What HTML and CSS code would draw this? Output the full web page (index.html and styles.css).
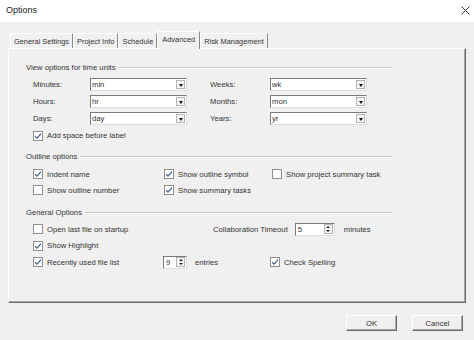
FILE: index.html
```html
<!DOCTYPE html>
<html lang="en">

<head>
    <meta charset="UTF-8">
    <meta name="viewport" content="width=device-width, initial-scale=1.0">
    <title>Options</title>
    <link rel="stylesheet" href="styles.css">
</head>

<body>
    <div class="window">
        <div class="title-bar">
            <span class="title">Options</span>
            <svg class="close" width="9" height="9" viewBox="0 0 9 9">
                <path d="M0.5 0.5L8.5 8.5M8.5 0.5L0.5 8.5" stroke="#333" stroke-width="1" fill="none" />
            </svg>
        </div>

        <div class="dialog">
            <div class="tabs">
                <div class="tab">General Settings</div>
                <div class="tab">Project Info</div>
                <div class="tab">Schedule</div>
                <div class="tab tab-active">Advanced</div>
                <div class="tab">Risk Management</div>
            </div>

            <div class="panel">
                <!-- View options for time units -->
                <div class="group">
                    <div class="group-title"><span>View options for time units</span>
                        <div class="group-line"></div>
                    </div>
                    <div class="units-grid">
                        <span>Minutes:</span>
                        <div class="combo"><span>min</span><div class="combo-btn"></div></div>
                        <span class="label-right">Weeks:</span>
                        <div class="combo"><span>wk</span><div class="combo-btn"></div></div>

                        <span>Hours:</span>
                        <div class="combo"><span>hr</span><div class="combo-btn"></div></div>
                        <span class="label-right">Months:</span>
                        <div class="combo"><span>mon</span><div class="combo-btn"></div></div>

                        <span>Days:</span>
                        <div class="combo"><span>day</span><div class="combo-btn"></div></div>
                        <span class="label-right">Years:</span>
                        <div class="combo"><span>yr</span><div class="combo-btn"></div></div>

                        <label class="check-row span-all">
                            <span class="box"><svg width="8" height="8" viewBox="0 0 8 8"><path d="M1 4.2L3 6.2L7 1.6" stroke="#3a5a84" stroke-width="1.1" fill="none" /></svg></span>
                            Add space before label
                        </label>
                    </div>
                </div>

                <!-- Outline options -->
                <div class="group group-outline">
                    <div class="group-title"><span>Outline options</span>
                        <div class="group-line"></div>
                    </div>
                    <div class="outline-grid">
                        <label class="check-row">
                            <span class="box"><svg width="8" height="8" viewBox="0 0 8 8"><path d="M1 4.2L3 6.2L7 1.6" stroke="#3a5a84" stroke-width="1.1" fill="none" /></svg></span>
                            Indent name
                        </label>
                        <label class="check-row">
                            <span class="box"><svg width="8" height="8" viewBox="0 0 8 8"><path d="M1 4.2L3 6.2L7 1.6" stroke="#3a5a84" stroke-width="1.1" fill="none" /></svg></span>
                            Show outline symbol
                        </label>
                        <label class="check-row">
                            <span class="box"></span>
                            Show project summary task
                        </label>

                        <label class="check-row">
                            <span class="box"></span>
                            Show outline number
                        </label>
                        <label class="check-row">
                            <span class="box"><svg width="8" height="8" viewBox="0 0 8 8"><path d="M1 4.2L3 6.2L7 1.6" stroke="#3a5a84" stroke-width="1.1" fill="none" /></svg></span>
                            Show summary tasks
                        </label>
                    </div>
                </div>

                <!-- General Options -->
                <div class="group group-general">
                    <div class="group-title"><span>General Options</span>
                        <div class="group-line"></div>
                    </div>
                    <div class="general-grid">
                        <label class="check-row">
                            <span class="box"></span>
                            Open last file on startup
                        </label>
                        <div class="timeout">
                            <span>Collaboration Timeout</span>
                            <div class="spin spin-wide"><span>5</span>
                                <div class="spin-btns"><span class="arrow-up"></span><span class="arrow-down"></span></div>
                            </div>
                            <span class="unit">minutes</span>
                        </div>

                        <label class="check-row span-all">
                            <span class="box"><svg width="8" height="8" viewBox="0 0 8 8"><path d="M1 4.2L3 6.2L7 1.6" stroke="#3a5a84" stroke-width="1.1" fill="none" /></svg></span>
                            Show Highlight
                        </label>

                        <label class="check-row">
                            <span class="box"><svg width="8" height="8" viewBox="0 0 8 8"><path d="M1 4.2L3 6.2L7 1.6" stroke="#3a5a84" stroke-width="1.1" fill="none" /></svg></span>
                            Recently used file list
                        </label>
                        <div class="entries">
                            <div class="spin"><span>9</span>
                                <div class="spin-btns"><span class="arrow-up"></span><span class="arrow-down"></span></div>
                            </div>
                            <span>entries</span>
                        </div>
                        <label class="check-row">
                            <span class="box"><svg width="8" height="8" viewBox="0 0 8 8"><path d="M1 4.2L3 6.2L7 1.6" stroke="#3a5a84" stroke-width="1.1" fill="none" /></svg></span>
                            Check Spelling
                        </label>
                    </div>
                </div>
            </div>

            <div class="buttons">
                <div class="btn">OK</div>
                <div class="btn">Cancel</div>
            </div>
        </div>
    </div>
</body>

</html>
```

FILE: styles.css
```css
body {
    margin: 0;
    background: #f0f0f0;
    font-family: "Liberation Sans", Arial, sans-serif;
    font-size: 7.7px;
    color: #333;
}

.window {
    width: 474px;
    height: 340px;
    overflow: hidden;
}

.title-bar {
    height: 22px;
    box-sizing: border-box;
    padding: 0 4px 2px 6px;
    background: #fff;
    display: flex;
    align-items: center;
    justify-content: space-between;
}

.title {
    font-size: 9px;
    color: #222;
}

.dialog {
    padding: 9px 8px 0 8px;
}

/* tab strip */
.tabs {
    display: flex;
    align-items: flex-end;
    height: 17px;
    padding-left: 2px;
    font-size: 7.4px;
}

.tab {
    height: 15px;
    box-sizing: border-box;
    padding: 3px 3px 0 3px;
    border-left: 1px solid #fff;
    border-top: 1px solid #fff;
    border-right: 1px solid #8a8a8a;
    white-space: nowrap;
}

.tab-active {
    height: 18px;
    margin-bottom: -1px;
    padding: 3px 4px 0 4px;
    background: #f0f0f0;
    position: relative;
    z-index: 1;
}

/* tab page */
.panel {
    height: 255px;
    box-sizing: border-box;
    padding: 12px 0 0 17px;
    border-top: 1px solid #fff;
    border-left: 1px solid #fff;
    border-right: 1px solid #6a6a6a;
    border-bottom: 1px solid #6a6a6a;
    box-shadow: inset -1px -1px 0 #a8a8a8;
}

.group {
    width: 367px;
}

.group-outline {
    margin-top: 6px;
}

.group-general {
    margin-top: 8px;
}

.group-title {
    height: 12px;
    display: flex;
    align-items: center;
}

.group-line {
    flex: 1;
    margin-left: 3px;
    margin-top: 2px;
    border-top: 1px solid #c9c9c9;
    border-bottom: 1px solid #fff;
}

.units-grid {
    margin-top: 3px;
    padding-left: 7px;
    display: grid;
    grid-template-columns: 57px 97px 83px 97px;
    grid-auto-rows: 17px;
    align-items: center;
}

.label-right {
    padding-left: 23px;
}

.span-all {
    grid-column: 1 / -1;
}

.combo {
    height: 13px;
    box-sizing: border-box;
    border: 1px solid;
    border-color: #7a7a7a #dcdcdc #dcdcdc #7a7a7a;
    background: #fff;
    display: flex;
    align-items: center;
    padding-left: 1px;
}

.combo-btn {
    margin-left: auto;
    margin-right: 1px;
    width: 9px;
    height: 9px;
    box-sizing: border-box;
    border: 1px solid #b4b4b4;
    background: #f4f4f4;
    display: flex;
    align-items: center;
    justify-content: center;
}

.combo-btn::after {
    content: "";
    border-left: 2.5px solid transparent;
    border-right: 2.5px solid transparent;
    border-top: 3px solid #111;
    margin-top: 1px;
}

/* check boxes */
.check-row {
    display: flex;
    align-items: center;
    gap: 4px;
    white-space: nowrap;
}

.box {
    width: 10px;
    height: 10px;
    box-sizing: border-box;
    border: 1px solid #8f8f8f;
    background: #fff;
    display: flex;
    align-items: center;
    justify-content: center;
}

.outline-grid {
    margin-top: 4px;
    padding-left: 7px;
    display: grid;
    grid-template-columns: 131px 108px auto;
    grid-auto-rows: 16px;
    align-items: center;
}

.general-grid {
    margin-top: 3px;
    padding-left: 7px;
    display: grid;
    grid-template-columns: 130px 107px auto;
    grid-auto-rows: 16.5px;
    align-items: center;
}

.timeout {
    grid-column: 2 / 4;
    padding-left: 50px;
    display: flex;
    align-items: center;
}

.timeout .spin {
    margin-left: 7px;
}

.unit {
    margin-left: 9px;
}

.entries {
    display: flex;
    align-items: center;
    gap: 8px;
}

.spin {
    width: 24px;
    height: 13px;
    box-sizing: border-box;
    border: 1px solid;
    border-color: #7a7a7a #dcdcdc #dcdcdc #7a7a7a;
    background: #fff;
    display: flex;
    align-items: center;
    padding-left: 2px;
}

.spin-wide {
    width: 40px;
}

.spin-btns {
    margin-left: auto;
    margin-right: 1px;
    width: 9px;
    height: 10px;
    box-sizing: border-box;
    border: 1px solid #b4b4b4;
    background: #f4f4f4;
    display: flex;
    flex-direction: column;
    align-items: center;
    justify-content: space-around;
}

.arrow-up {
    border-left: 2px solid transparent;
    border-right: 2px solid transparent;
    border-bottom: 2px solid #222;
}

.arrow-down {
    border-left: 2px solid transparent;
    border-right: 2px solid transparent;
    border-top: 2px solid #222;
}

/* dialog buttons */
.buttons {
    display: flex;
    justify-content: flex-end;
    gap: 15px;
    margin-top: 12px;
    padding-right: 3px;
}

.btn {
    width: 51px;
    height: 16px;
    box-sizing: border-box;
    border-top: 1px solid #fff;
    border-left: 1px solid #fff;
    border-right: 1px solid #6a6a6a;
    border-bottom: 1px solid #6a6a6a;
    box-shadow: inset -1px -1px 0 #a8a8a8;
    background: #f0f0f0;
    display: flex;
    align-items: center;
    justify-content: center;
}
```
